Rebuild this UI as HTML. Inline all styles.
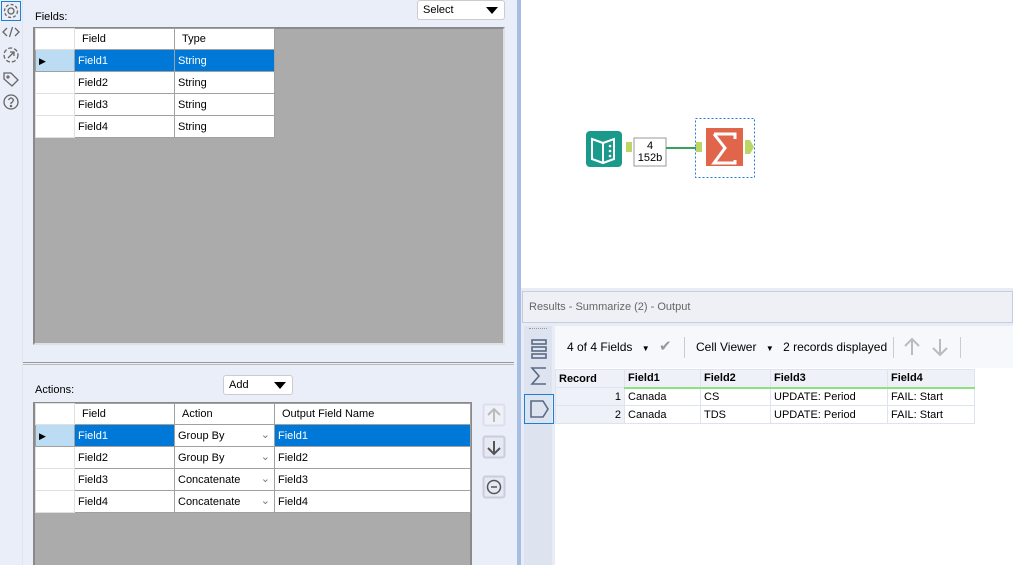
<!DOCTYPE html>
<html><head><style>
*{box-sizing:border-box;margin:0;padding:0}
html,body{width:1013px;height:565px;overflow:hidden}
body{background:#eaeef8;font-family:"Liberation Sans",sans-serif;font-size:11px;color:#000;position:relative}
.a{position:absolute}
table{border-collapse:collapse;table-layout:fixed}
td{border:1px solid #a0a0a0;height:22px;line-height:20px;padding:0 3px;white-space:nowrap;overflow:hidden;vertical-align:middle}
.sel{background:#0078d7;color:#fff}
.rh{background:#fff;border-color:#e0e0e0}
.rhs{background:#bcdcf4;font-size:9px}
.dd{background:#fff;border:1px solid #ccc;border-radius:3px;font-size:11px;padding:0 5px;line-height:18px}
.tri{position:absolute;right:6px;top:6px;border-left:6px solid transparent;border-right:6px solid transparent;border-top:7px solid #000}
.ar{position:absolute;right:4px;top:0;color:#777}
.ac{position:relative}
.rt td{height:18px;line-height:16px;border:1px solid #dde3ef;padding:0 3px}
</style></head><body>
<div class="a" style="left:1px;top:1px;width:20px;height:20px;border:1px solid #1c7fd6"></div>
<svg class="a" style="left:0;top:0" width="22" height="115" fill="none" stroke="#666" stroke-width="1.3">
<circle cx="11" cy="11" r="3"/><circle cx="11" cy="11" r="6.5" stroke-dasharray="3 2"/>
<path d="M7 28 L3 32 L7 36 M15 28 L19 32 L15 36 M12.5 27 L9.5 37"/>
<circle cx="11" cy="55" r="7" stroke-dasharray="4 2"/><path d="M8 58 L14 52 M10 52 H14 V56"/>
<path d="M4 73 L11 73 L18 80 L12 86 L4 79 Z"/><circle cx="8" cy="77" r="1"/>
<circle cx="11" cy="102" r="7"/><path d="M8.5 100 Q11 96 13.5 100 Q13 102 11 103 V104"/><circle cx="11" cy="106" r=".6"/>
</svg>
<div class="a" style="left:22px;top:0;width:1px;height:565px;background:#dfe4ee"></div>
<div class="a" style="left:35px;top:11px">Fields:</div>
<div class="a dd" style="left:417px;top:0;width:88px;height:20px">Select<span class="tri"></span></div>
<div class="a" style="left:33px;top:27px;width:472px;height:318px;background:#ababab;border:2px solid #8a8a8a;border-right-color:#e0e0e0;border-bottom-color:#e0e0e0"></div>
<table class="a" style="left:35px;top:28px">
<col width="39"><col width="100"><col width="100">
<tr><td class="rh" style="height:21px"></td><td style="background:#fff;padding-left:7px;height:21px">Field</td><td style="background:#fff;padding-left:7px;height:21px">Type</td></tr>
<tr><td class="rhs">&#9654;</td><td class="sel">Field1</td><td class="sel">String</td></tr>
<tr><td class="rh"></td><td style="background:#fff">Field2</td><td style="background:#fff">String</td></tr>
<tr><td class="rh"></td><td style="background:#fff">Field3</td><td style="background:#fff">String</td></tr>
<tr><td class="rh"></td><td style="background:#fff">Field4</td><td style="background:#fff">String</td></tr>
</table>
<div class="a" style="left:23px;top:362px;width:491px;height:1px;background:#999"></div>
<div class="a" style="left:23px;top:364px;width:491px;height:1px;background:#bbb"></div>
<div class="a" style="left:35px;top:384px">Actions:</div>
<div class="a dd" style="left:223px;top:375px;width:70px;height:20px">Add<span class="tri"></span></div>
<div class="a" style="left:33px;top:402px;width:439px;height:170px;background:#ababab;border:2px solid #8a8a8a"></div>
<table class="a" style="left:35px;top:403px">
<col width="39"><col width="100"><col width="100"><col width="196">
<tr><td class="rh" style="height:21px"></td><td style="background:#fff;padding-left:7px;height:21px">Field</td><td style="background:#fff;padding-left:7px;height:21px">Action</td><td style="background:#fff;padding-left:7px;height:21px">Output Field Name</td></tr>
<tr><td class="rhs">&#9654;</td><td class="sel">Field1</td><td class="ac" style="background:#fff">Group By<span class="ar">&#8964;</span></td><td class="sel">Field1</td></tr>
<tr><td class="rh"></td><td style="background:#fff">Field2</td><td class="ac" style="background:#fff">Group By<span class="ar">&#8964;</span></td><td style="background:#fff">Field2</td></tr>
<tr><td class="rh"></td><td style="background:#fff">Field3</td><td class="ac" style="background:#fff">Concatenate<span class="ar">&#8964;</span></td><td style="background:#fff">Field3</td></tr>
<tr><td class="rh"></td><td style="background:#fff">Field4</td><td class="ac" style="background:#fff">Concatenate<span class="ar">&#8964;</span></td><td style="background:#fff">Field4</td></tr>
</table>
<svg class="a" style="left:482px;top:403px" width="24" height="100" fill="none" stroke-width="2">
<rect x="1.5" y="1.5" width="21" height="21" rx="2" fill="#eef1f8" stroke="#dde"/>
<path d="M12 6 V19 M6 12 L12 6 L18 12" stroke="#bbb"/>
<rect x="1.5" y="33.5" width="21" height="21" rx="2" fill="#e4e9f4" stroke="#ccd"/>
<path d="M12 38 V51 M6 45 L12 51 L18 45" stroke="#555"/>
<rect x="1.5" y="73.5" width="21" height="21" rx="2" fill="#e4e9f4" stroke="#ccd"/>
<circle cx="12" cy="84" r="6.5" stroke="#555" stroke-width="1.5"/><path d="M9 84 H15" stroke="#555" stroke-width="1.5"/>
</svg>
<div class="a" style="left:517px;top:0;width:4px;height:565px;background:#a7bde3"></div>
<div class="a" style="left:521px;top:0;width:492px;height:288px;background:#fff"></div>
<svg class="a" style="left:580px;top:115px" width="185" height="65">
<rect x="6" y="16" width="36" height="36" rx="4" fill="#1a9a8a"/>
<path d="M12 24 L23 28 L34 24 V44 L23 48 L12 44 Z M23 28 V48" fill="none" stroke="#fff" stroke-width="2"/>
<circle cx="30" cy="31" r="1.3" fill="#fff"/><circle cx="30" cy="36" r="1.3" fill="#fff"/><circle cx="30" cy="41" r="1.3" fill="#fff"/>
<path d="M46 27 H52 V37 H46 Z" fill="#b9d667"/>
<rect x="54" y="23" width="32" height="28" fill="#fff" stroke="#999"/>
<text x="70" y="34" font-size="11" text-anchor="middle" font-family="Liberation Sans">4</text>
<text x="70" y="46" font-size="11" text-anchor="middle" font-family="Liberation Sans">152b</text>
<path d="M86 33 H116" stroke="#3aa15c" stroke-width="2"/>
<path d="M116 27 H122 V37 H116 Z" fill="#b9d667"/>
<rect x="115.5" y="3.5" width="59" height="59" fill="none" stroke="#2a7ad6" stroke-dasharray="2 2"/>
<rect x="126" y="13" width="37" height="38" fill="#e0654b"/>
<path d="M134 19 H155 V24 M155 45 V48 H134 L145 33 L134 19" fill="none" stroke="#fff" stroke-width="3"/>
<path d="M165 25 H170 L174 32 L170 39 H165 Z" fill="#b9d667"/>
</svg>
<div class="a" style="left:521px;top:288px;width:492px;height:277px;background:#e8ecf6"></div>
<div class="a" style="left:522px;top:291px;width:491px;height:32px;background:#eef0f6;border:1px solid #c8ccd6;color:#666;font-size:11px;padding:9px 6px">Results - Summarize (2) - Output</div>
<div class="a" style="left:524px;top:326px;width:28px;height:239px;background:#dde3ef"></div>
<div class="a" style="left:529px;top:328px;width:18px;border-top:1px dotted #999"></div>
<svg class="a" style="left:524px;top:334px" width="30" height="95" fill="none" stroke="#5a6a86" stroke-width="1.6">
<rect x="8" y="6" width="14" height="4"/><rect x="8" y="13" width="14" height="4"/><rect x="8" y="20" width="14" height="4"/>
<path d="M22 34 H8 L15 42 L8 50 H22"/>
<rect x="0.5" y="60.5" width="29" height="29" stroke="#1c7fd6" stroke-width="1"/>
<path d="M7 67 H19 L24 75 L19 83 H7 Z"/>
</svg>
<div class="a" style="left:555px;top:326px;width:458px;height:239px;background:#fff"></div>
<div class="a" style="left:555px;top:326px;width:458px;height:42px;background:#f7f8fb"></div>
<div class="a" style="left:567px;top:340px;font-size:12px;line-height:14px">4 of 4 Fields <span style="font-size:8px;margin-left:6px">&#9660;</span> <span style="color:#999;font-size:15px;margin-left:6px">&#10004;</span></div>
<div class="a" style="left:684px;top:337px;width:1px;height:21px;background:#ccc"></div>
<div class="a" style="left:696px;top:340px;font-size:12px;line-height:14px">Cell Viewer <span style="font-size:8px;margin:0 6px">&#9660;</span> 2 records displayed</div>
<div class="a" style="left:893px;top:337px;width:1px;height:21px;background:#ccc"></div>
<svg class="a" style="left:900px;top:336px" width="60" height="22" fill="none" stroke="#bbb" stroke-width="2"><path d="M12 3 V19 M5 10 L12 3 L19 10 M40 3 V19 M33 12 L40 19 L47 12"/></svg>
<div class="a" style="left:960px;top:337px;width:1px;height:21px;background:#ccc"></div>
<table class="a rt" style="left:555px;top:369px">
<col width="69"><col width="76"><col width="70"><col width="117"><col width="87">
<tr style="background:#eef1f8;font-weight:bold"><td>Record</td><td style="border-bottom:2px solid #8fe07e">Field1</td><td style="border-bottom:2px solid #8fe07e">Field2</td><td style="border-bottom:2px solid #8fe07e">Field3</td><td style="border-bottom:2px solid #8fe07e">Field4</td></tr>
<tr><td style="text-align:right;background:#eef1f8">1</td><td>Canada</td><td>CS</td><td>UPDATE: Period</td><td>FAIL: Start</td></tr>
<tr><td style="text-align:right;background:#eef1f8">2</td><td>Canada</td><td>TDS</td><td>UPDATE: Period</td><td>FAIL: Start</td></tr>
</table>
</body></html>
